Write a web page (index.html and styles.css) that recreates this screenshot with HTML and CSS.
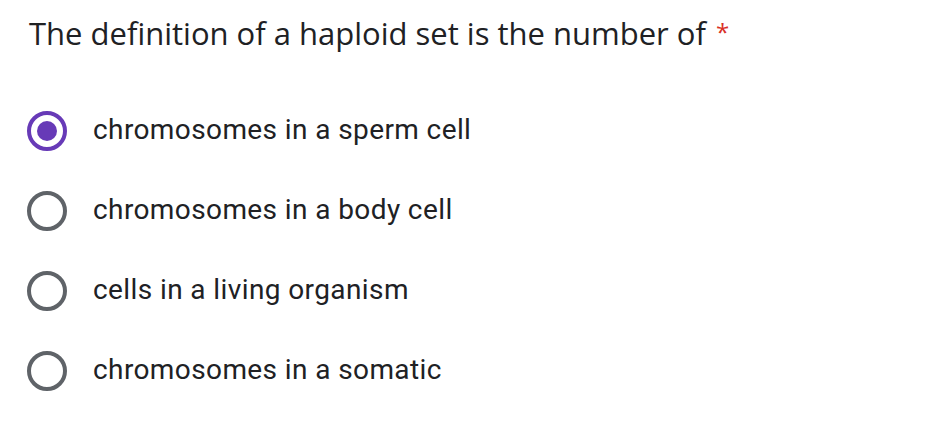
FILE: index.html
```html
<!DOCTYPE html>
<html>
<head>
<meta charset="utf-8">
<link rel="stylesheet" href="styles.css">
</head>
<body>
<div class="question">
  <div class="title">The definition of a haploid set is the number of<span class="req">*</span></div>
  <div class="options">
    <div class="option"><span class="radio checked"></span><span class="label">chromosomes in a sperm cell</span></div>
    <div class="option"><span class="radio"></span><span class="label">chromosomes in a body cell</span></div>
    <div class="option"><span class="radio"></span><span class="label">cells in a living organism</span></div>
    <div class="option"><span class="radio"></span><span class="label">chromosomes in a somatic</span></div>
  </div>
</div>
</body>
</html>
```

FILE: styles.css
```css
html, body { margin: 0; padding: 0; background: #fff; }
.question { padding: 12px 0 0 29px; }
.title {
  font-family: "Open Sans", sans-serif;
  font-size: 31px;
  line-height: 40px;
  color: #202124;
  letter-spacing: 0;
}
.req { color: #d93025; margin-left: 10px; font-size: 24px; vertical-align: 4px; }
.options { margin-top: 38px; display: flex; flex-direction: column; }
.option { display: flex; align-items: center; height: 80px; }
.radio {
  box-sizing: border-box;
  width: 40px; height: 40px;
  margin-left: -2px;
  border: 4px solid #5f6368;
  border-radius: 50%;
  display: flex; align-items: center; justify-content: center;
}
.radio.checked { border-color: #673ab7; }
.radio.checked::after {
  content: ""; width: 20px; height: 20px; border-radius: 50%; background: #673ab7;
}
.label {
  margin-left: 26px;
  margin-bottom: 3px;
  font-family: Roboto, sans-serif;
  font-size: 28px;
  letter-spacing: 0.4px;
  color: #202124;
}
```
